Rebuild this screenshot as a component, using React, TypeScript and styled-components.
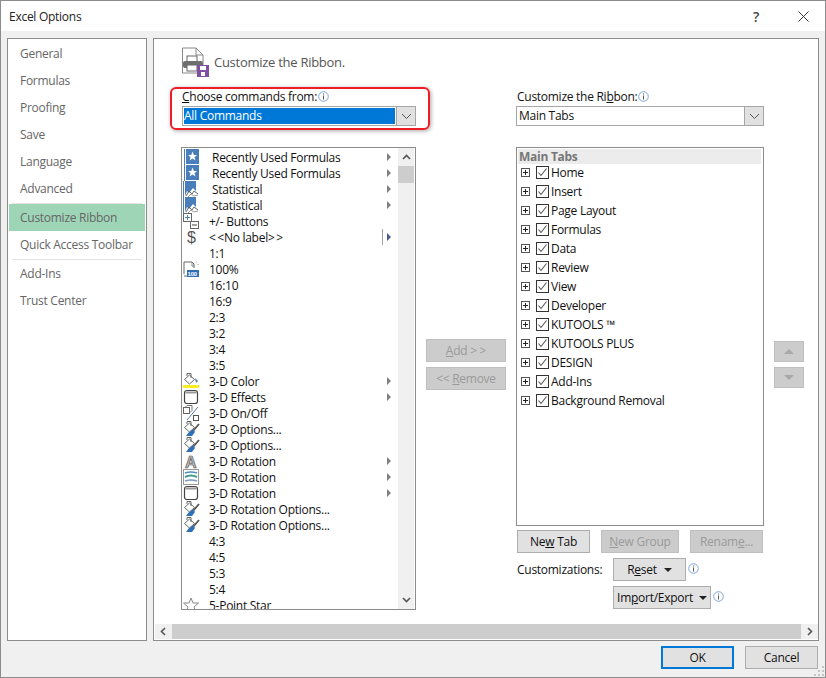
import styled, { createGlobalStyle } from 'styled-components';
import type { ReactNode } from 'react';

const GlobalStyle = createGlobalStyle`
  html, body {
    margin: 0;
    padding: 0;
    background: #f0f0f0;
  }
  * {
    box-sizing: border-box;
  }
  u {
    text-underline-offset: 1px;
  }
`;

const Window = styled.div`
  position: relative;
  width: 826px;
  height: 678px;
  display: flex;
  flex-direction: column;
  border: 1px solid #8c8c8c;
  background: #f0f0f0;
  overflow: hidden;
  font-family: "Open Sans", "Noto Sans", sans-serif;
  font-size: 12px;
  letter-spacing: -0.27px;
  color: #111;
`;

const TitleBar = styled.div`
  height: 30px;
  flex: none;
  display: flex;
  align-items: center;
  padding: 0 16px 0 8px;
  background: #fff;
  color: #222;
`;

const TitleText = styled.div`
  flex: 1;
`;

const HelpMark = styled.div`
  width: 45px;
  font-size: 14px;
  font-weight: 600;
  color: #444;
`;

const Body = styled.div`
  flex: 1;
  min-height: 0;
  display: flex;
  gap: 6px;
  padding: 7px 0 0 6px;
`;

const Nav = styled.div`
  width: 140px;
  height: 603px;
  flex: none;
  padding: 1px 1px 0;
  border: 1px solid #8c8c8c;
  background: #fff;
`;

const NavItem = styled.div<{ $active?: boolean }>`
  height: 27px;
  display: flex;
  align-items: center;
  padding-left: 11px;
  color: #666;
  background: ${(p) => (p.$active ? '#9fd5b7' : 'transparent')};
  font-size: 12px;
`;

const NavRule = styled.div`
  height: 1px;
  margin: 1px 3px 0;
  background: #e4e4e4;
`;

const Panel = styled.div`
  width: 666px;
  height: 603px;
  flex: none;
  display: flex;
  flex-direction: column;
  border: 1px solid #8c8c8c;
  background: #fff;
`;

const PanelContent = styled.div`
  flex: 1;
  min-height: 0;
  padding: 8px 0 0 27px;
`;

const Heading = styled.div`
  display: flex;
  align-items: center;
  gap: 3px;
  height: 30px;
  margin-bottom: 11px;
  font-size: 13px;
  color: #555;
`;

const Columns = styled.div`
  display: grid;
  grid-template-columns: 235px 80px 248px 30px;
  column-gap: 10px;
`;

const Column = styled.div`
  display: flex;
  flex-direction: column;
`;

const Highlight = styled.div`
  position: relative;
  margin-bottom: 21px;

  &::after {
    content: '';
    position: absolute;
    top: -1px;
    left: -11px;
    right: -14px;
    bottom: -4px;
    border: 2px solid #ee1c25;
    border-radius: 6px;
    box-shadow: 1px 1px 4px rgba(0, 0, 0, 0.35);
    pointer-events: none;
  }
`;

const FieldLabel = styled.div<{ $inset?: number }>`
  height: 18px;
  display: flex;
  align-items: center;
  gap: 1px;
  padding: 0 0 2px ${(p) => p.$inset ?? 1}px;
`;

const Select = styled.div<{ $inset?: number; $gap?: number }>`
  height: 20px;
  display: flex;
  margin-left: ${(p) => p.$inset ?? 0}px;
  margin-bottom: ${(p) => p.$gap ?? 0}px;
  border: 1px solid #a6a6a6;
  background: #fff;
`;

const SelectValue = styled.div<{ $selected?: boolean }>`
  flex: 1;
  display: flex;
  align-items: center;
  padding: 0 0 2px ${(p) => (p.$selected ? 0 : 2)}px;
  margin: ${(p) => (p.$selected ? '1px' : '0')};
  background: ${(p) => (p.$selected ? '#0078d7' : 'transparent')};
  color: ${(p) => (p.$selected ? '#fff' : '#111')};
`;

const SelectButton = styled.div`
  width: 19px;
  display: flex;
  align-items: center;
  justify-content: center;
  background: #e1e1e1;
  border-left: 1px solid #a6a6a6;
`;

const ListBox = styled.div`
  height: 463px;
  display: flex;
  padding-right: 1px;
  border: 1px solid #8c8c8c;
  background: #fff;
`;

const ListItems = styled.div`
  flex: 1;
  min-width: 0;
  padding: 1px 0 0 1px;
  overflow: hidden;
`;

const ListRow = styled.div`
  height: 16px;
  display: flex;
  align-items: center;
  white-space: nowrap;
`;

const RowIcon = styled.span`
  width: 16px;
  height: 16px;
  flex: none;
  display: block;

  svg {
    overflow: visible;
  }
`;

const RowLabel = styled.span<{ $far?: boolean }>`
  flex: 1;
  margin-left: ${(p) => (p.$far ? 13 : 10)}px;
`;

const SubmenuArrow = styled.span<{ $split?: boolean }>`
  width: 0;
  height: 0;
  margin-right: 7px;
  border-left: 4px solid ${(p) => (p.$split ? '#4a5a8c' : '#808080')};
  border-top: 4px solid transparent;
  border-bottom: 4px solid transparent;
`;

const SplitRule = styled.span`
  width: 1px;
  height: 16px;
  margin-right: 4px;
  background: #a0a0a0;
`;

const VScroll = styled.div`
  width: 16px;
  flex: none;
  display: flex;
  flex-direction: column;
  background: #f0f0f0;
`;

const ScrollEnd = styled.div<{ $h: number }>`
  height: ${(p) => p.$h}px;
  flex: none;
  display: flex;
  align-items: center;
  justify-content: center;
`;

const VThumb = styled.div`
  height: 17px;
  flex: none;
  background: #cdcdcd;
`;

const ScrollSpacer = styled.div`
  flex: 1;
`;

const TreeBox = styled.div`
  height: 379px;
  margin-bottom: 4px;
  padding: 1px;
  border: 1px solid #8c8c8c;
  background: #fff;
`;

const TreeHeader = styled.div`
  height: 15px;
  display: flex;
  align-items: center;
  padding-left: 1px;
  margin: 0 1px -1px 0;
  background: #ececec;
  color: #777;
  font-weight: 700;
`;

const TreeRow = styled.div`
  position: relative;
  height: 19px;
  display: flex;
  align-items: center;
  padding-left: 3px;
`;

const Expander = styled.span`
  position: relative;
  width: 9px;
  height: 9px;
  flex: none;
  margin-right: 6px;
  border: 1px solid #555;

  &::before,
  &::after {
    content: '';
    position: absolute;
    background: #222;
  }
  &::before {
    left: 1px;
    right: 1px;
    top: 3px;
    height: 1px;
  }
  &::after {
    top: 1px;
    bottom: 1px;
    left: 3px;
    width: 1px;
  }
`;

const CheckBox = styled.span`
  width: 13px;
  height: 13px;
  flex: none;
  display: flex;
  margin-right: 2px;
  border: 1px solid #333;
  background: #fff;
`;

const Button = styled.div<{ $w?: number; $off?: boolean; $h?: number; $gap?: number }>`
  width: ${(p) => (p.$w ? `${p.$w}px` : 'auto')};
  height: ${(p) => p.$h ?? 23}px;
  flex: none;
  display: flex;
  align-items: center;
  justify-content: center;
  gap: ${(p) => p.$gap ?? 9}px;
  border: 1px solid ${(p) => (p.$off ? '#bfbfbf' : '#adadad')};
  background: ${(p) => (p.$off ? '#cccccc' : '#e1e1e1')};
  color: ${(p) => (p.$off ? '#9a9a9a' : '#111')};
`;

const TreeButtons = styled.div`
  display: flex;
  justify-content: space-between;
  padding: 0 1px;
  margin-bottom: 5px;
`;

const Customizations = styled.div`
  display: grid;
  grid-template-columns: 96px auto;
  padding-left: 1px;
`;

const CustomLabel = styled.div`
  height: 23px;
  display: flex;
  align-items: center;
`;

const CustomActions = styled.div`
  display: flex;
  flex-direction: column;
  gap: 5px;
`;

const ActionRow = styled.div`
  display: flex;
  align-items: flex-start;
  gap: 2px;
`;

const InfoSlot = styled.span`
  margin-top: 5px;
  display: flex;
`;

const DropCaret = styled.span`
  width: 0;
  height: 0;
  border-top: 4px solid #222;
  border-left: 4px solid transparent;
  border-right: 4px solid transparent;
`;

const MiddleColumn = styled(Column)`
  gap: 5px;
  padding-top: 251px;
`;

const MoveColumn = styled(Column)`
  gap: 5px;
  padding-top: 253px;
`;

const Triangle = styled.span<{ $down?: boolean }>`
  width: 0;
  height: 0;
  border-left: 5px solid transparent;
  border-right: 5px solid transparent;
  ${(p) => (p.$down ? 'border-top: 5px solid #a8a8a8;' : 'border-bottom: 5px solid #a8a8a8;')}
`;

const HScroll = styled.div`
  height: 15px;
  flex: none;
  display: flex;
  margin: 0 0 1px 1px;
  background: #f0f0f0;
`;

const HArrow = styled.div`
  width: 17px;
  flex: none;
  display: flex;
  align-items: center;
  justify-content: center;
`;

const HThumb = styled.div`
  flex: 1;
  background: #cdcdcd;
`;

const Footer = styled.div`
  height: 36px;
  flex: none;
  display: flex;
  justify-content: flex-end;
  gap: 11px;
  padding: 5px 7px 0 0;
`;

const FooterButton = styled.div<{ $primary?: boolean }>`
  width: 73px;
  height: 23px;
  display: flex;
  align-items: center;
  justify-content: center;
  border: ${(p) => (p.$primary ? '2px solid #0078d7' : '1px solid #adadad')};
  background: #e1e1e1;
`;

const Gripper = styled.svg`
  position: absolute;
  right: 0;
  bottom: 0;
`;

const Chevron = ({ dir }: { dir: 'up' | 'down' | 'left' | 'right' }) => {
  const points = {
    down: '1,2 4.5,5.5 8,2',
    up: '1,6 4.5,2.5 8,6',
    left: '6,1 2.5,4.5 6,8',
    right: '3,1 6.5,4.5 3,8',
  }[dir];
  return (
    <svg width="9" height="9" viewBox="0 0 9 9">
      <polyline points={points} fill="none" stroke="#555" strokeWidth="1.6" />
    </svg>
  );
};

const ThinChevron = () => (
  <svg width="11" height="7" viewBox="0 0 11 7">
    <polyline points="1,1 5.5,5.5 10,1" fill="none" stroke="#555" strokeWidth="1" />
  </svg>
);

const Info = () => (
  <svg width="11" height="11" viewBox="0 0 11 11">
    <circle cx="5.5" cy="5.5" r="4.8" fill="#fff" stroke="#7da7d9" />
    <rect x="5" y="2.5" width="1" height="1" fill="#555" />
    <rect x="5" y="4.5" width="1" height="4" fill="#555" />
  </svg>
);

const Check = () => (
  <svg width="11" height="11" viewBox="0 0 11 11">
    <polyline points="1.5,5.5 4,8.5 9.5,1.5" fill="none" stroke="#555" strokeWidth="1.1" />
  </svg>
);

const blue = '#4a7ebb';

const bucket = (
  <>
    <polygon points="6.5,2 11.5,6.5 6.5,11 1.5,6.5" fill="#fff" stroke="#666" />
    <path d="M4 3 V0.5 H8 V5" fill="none" stroke="#666" />
  </>
);

const icons: Record<string, ReactNode> = {
  star: (
    <>
      <rect x="1" y="0" width="1" height="16" fill={blue} />
      <rect x="3" y="0" width="13" height="15" fill={blue} />
      <polygon points="9.5,2.5 10.8,6 14,6 11.5,8.2 12.5,11.5 9.5,9.5 6.5,11.5 7.5,8.2 5,6 8.2,6" fill="#fff" />
    </>
  ),
  chart: (
    <>
      <rect x="0" y="0" width="1" height="16" fill={blue} />
      <path d="M2 0 H13 V10 L10 7 L6 12 L4 10 L2 15 Z" fill={blue} />
      <polyline points="3,15 6,10 9,13 11,10 15,13" fill="none" stroke="#666" />
      <polyline points="5,16 8,13 11,15 15,14" fill="none" stroke="#999" />
    </>
  ),
  plusminus: (
    <>
      <rect x="0.5" y="0.5" width="8" height="8" fill="#fff" stroke="#666" />
      <path d="M2 4.5 h5 M4.5 2 v5" stroke={blue} />
      <rect x="7.5" y="8.5" width="8" height="7" fill="#fff" stroke="#666" />
      <path d="M9 12 h5" stroke="#444" />
    </>
  ),
  dollar: (
    <text x="4" y="14" fontSize="16" fontFamily="Liberation Sans" fill="#555">
      $
    </text>
  ),
  hundred: (
    <>
      <path d="M1 13 V1 H9 L11 3 V7 M1 15 h3" fill="none" stroke="#666" />
      <path d="M9 1 V5 H11.5" fill="none" stroke="#888" />
      <path d="M13 1 h2 M15 3 v2" stroke="#aaa" strokeDasharray="1 1" />
      <rect x="4" y="9" width="12" height="7" fill="#2f6fb5" />
      <text x="4.6" y="15" fontSize="6" fontWeight="700" fontFamily="Liberation Sans" fill="#fff">
        100
      </text>
    </>
  ),
  bucket: (
    <>
      {bucket}
      <path d="M12 5 l3 3 -2 2 z" fill={blue} />
      <rect x="0" y="12" width="16" height="3" fill="#f7ee1c" />
    </>
  ),
  cube: (
    <>
      <rect x="1.5" y="1.5" width="13" height="13" rx="2.5" fill="#fff" stroke="#444" strokeWidth="1.2" />
      <path d="M2.5 3.5 H13.5" stroke="#999" strokeWidth="2" />
    </>
  ),
  onoff: (
    <>
      <rect x="0.5" y="2.5" width="6" height="6" fill="#fff" stroke="#666" />
      <path d="M2 2.5 l2 -2 h5 v5 l-2 2" fill="none" stroke="#777" />
      <path d="M4 15 L15 2" stroke={blue} />
      <rect x="10.5" y="10.5" width="5" height="5" fill="#fff" stroke="#555" />
    </>
  ),
  brush: (
    <>
      {bucket}
      <path d="M16 3 L10 10" stroke="#555" strokeWidth="1.8" />
      <path d="M10 8.5 L6 11 L3 15 L9 15 L12 11 Z" fill="#2f6fb5" />
    </>
  ),
  letter: (
    <text x="2" y="15" fontSize="16" fontWeight="700" fontFamily="Liberation Sans" fill="#bbb" stroke="#555" strokeWidth="0.7">
      A
    </text>
  ),
  wave: (
    <>
      <rect x="0.5" y="0.5" width="15" height="15" fill="#fff" stroke="#999" />
      <path d="M2 4 Q8 2 14 4" stroke="#4a90c2" strokeWidth="1.5" fill="none" />
      <path d="M2 8 Q8 5 14 8" stroke="#3f9a8c" strokeWidth="2" fill="none" />
      <path d="M2 12 Q8 10 14 12" stroke="#7a9ac2" strokeWidth="1.5" fill="none" />
    </>
  ),
  outline: (
    <polygon points="8,1 10,6 15.5,6 11,10 13,15.5 8,12.5 3,15.5 5,10 0.5,6 6,6" fill="#fff" stroke="#888" />
  ),
};

const Icon = ({ name }: { name?: string }) => (
  <RowIcon>
    {name && (
      <svg width="16" height="16" viewBox="0 0 16 16">
        {icons[name]}
      </svg>
    )}
  </RowIcon>
);

type Command = { label: string; icon?: string; far?: boolean; sub?: boolean; split?: boolean };

const commands: Command[] = [
  { label: 'Recently Used Formulas', icon: 'star', far: true, sub: true },
  { label: 'Recently Used Formulas', icon: 'star', far: true, sub: true },
  { label: 'Statistical', icon: 'chart', far: true, sub: true },
  { label: 'Statistical', icon: 'chart', far: true, sub: true },
  { label: '+/- Buttons', icon: 'plusminus' },
  { label: '<\u2009<No label>\u2009>', icon: 'dollar', split: true },
  { label: '1:1' },
  { label: '100%', icon: 'hundred' },
  { label: '16:10' },
  { label: '16:9' },
  { label: '2:3' },
  { label: '3:2' },
  { label: '3:4' },
  { label: '3:5' },
  { label: '3-D Color', icon: 'bucket', sub: true },
  { label: '3-D Effects', icon: 'cube', sub: true },
  { label: '3-D On/Off', icon: 'onoff' },
  { label: '3-D Options...', icon: 'brush' },
  { label: '3-D Options...', icon: 'brush' },
  { label: '3-D Rotation', icon: 'letter', sub: true },
  { label: '3-D Rotation', icon: 'wave', sub: true },
  { label: '3-D Rotation', icon: 'cube', sub: true },
  { label: '3-D Rotation Options...', icon: 'brush' },
  { label: '3-D Rotation Options...', icon: 'brush' },
  { label: '4:3' },
  { label: '4:5' },
  { label: '5:3' },
  { label: '5:4' },
  { label: '5-Point Star', icon: 'outline' },
];

const navTop = ['General', 'Formulas', 'Proofing', 'Save', 'Language', 'Advanced'];

const tabs = [
  'Home',
  'Insert',
  'Page Layout',
  'Formulas',
  'Data',
  'Review',
  'View',
  'Developer',
  'KUTOOLS ™',
  'KUTOOLS PLUS',
  'DESIGN',
  'Add-Ins',
  'Background Removal',
];

const HeadingIcon = () => (
  <svg width="30" height="30" viewBox="0 0 30 30">
    <path d="M1.5 1 H15 L22 8 V26 H1.5 Z" fill="#fff" stroke="#888" />
    <path d="M15 1 V8 H22" fill="none" stroke="#888" />
    <rect x="6" y="9" width="10" height="6" fill="#fff" stroke="#666" />
    <rect x="2" y="14" width="20" height="7" rx="2" fill="#6e6e6e" />
    <rect x="6" y="18" width="10" height="6" fill="#fff" stroke="#666" />
    <rect x="16" y="18" width="12" height="12" fill="#7e4fa3" />
    <rect x="19" y="19" width="6" height="4" fill="#fff" />
    <rect x="20" y="25" width="4" height="4" fill="#fff" />
  </svg>
);

export default function App() {
  return (
    <>
      <GlobalStyle />
      <Window>
        <TitleBar>
          <TitleText>Excel Options</TitleText>
          <HelpMark>?</HelpMark>
          <svg width="11" height="11" viewBox="0 0 11 11">
            <path d="M0.5 0.5 L10.5 10.5 M10.5 0.5 L0.5 10.5" stroke="#333" />
          </svg>
        </TitleBar>

        <Body>
          <Nav>
            {navTop.map((item) => (
              <NavItem key={item}>{item}</NavItem>
            ))}
            <NavRule />
            <NavItem $active>Customize Ribbon</NavItem>
            <NavItem>Quick Access Toolbar</NavItem>
            <NavRule />
            <NavItem>Add-Ins</NavItem>
            <NavItem>Trust Center</NavItem>
          </Nav>

          <Panel>
            <PanelContent>
              <Heading>
                <HeadingIcon />
                Customize the Ribbon.
              </Heading>

              <Columns>
                <Column>
                  <Highlight>
                    <FieldLabel>
                      <span>
                        <u>C</u>hoose commands from:
                      </span>
                      <Info />
                    </FieldLabel>
                    <Select $inset={1}>
                      <SelectValue $selected>All Commands</SelectValue>
                      <SelectButton>
                        <ThinChevron />
                      </SelectButton>
                    </Select>
                  </Highlight>

                  <ListBox>
                    <ListItems>
                      {commands.map((c, i) => (
                        <ListRow key={i}>
                          <Icon name={c.icon} />
                          <RowLabel $far={c.far}>{c.label}</RowLabel>
                          {c.split && <SplitRule />}
                          {(c.sub || c.split) && <SubmenuArrow $split={c.split} />}
                        </ListRow>
                      ))}
                    </ListItems>
                    <VScroll>
                      <ScrollEnd $h={18}>
                        <Chevron dir="up" />
                      </ScrollEnd>
                      <VThumb />
                      <ScrollSpacer />
                      <ScrollEnd $h={18}>
                        <Chevron dir="down" />
                      </ScrollEnd>
                    </VScroll>
                  </ListBox>
                </Column>

                <MiddleColumn>
                  <Button $off>
                    <span>
                      <u>A</u>dd &gt; &gt;
                    </span>
                  </Button>
                  <Button $off>
                    <span>
                      &lt;&lt; <u>R</u>emove
                    </span>
                  </Button>
                </MiddleColumn>

                <Column>
                  <FieldLabel>
                    <span>
                      Customize the Ri<u>b</u>bon:
                    </span>
                    <Info />
                  </FieldLabel>
                  <Select $gap={21}>
                    <SelectValue>Main Tabs</SelectValue>
                    <SelectButton>
                      <ThinChevron />
                    </SelectButton>
                  </Select>

                  <TreeBox>
                    <TreeHeader>Main Tabs</TreeHeader>
                    {tabs.map((tab) => (
                      <TreeRow key={tab}>
                        <Expander />
                        <CheckBox>
                          <Check />
                        </CheckBox>
                        {tab}
                      </TreeRow>
                    ))}
                  </TreeBox>

                  <TreeButtons>
                    <Button $w={73}>
                      <span>
                        Ne<u>w</u> Tab
                      </span>
                    </Button>
                    <Button $w={78} $off>
                      <span>
                        <u>N</u>ew Group
                      </span>
                    </Button>
                    <Button $w={73} $off>
                      <span>
                        Renam<u>e</u>...
                      </span>
                    </Button>
                  </TreeButtons>

                  <Customizations>
                    <CustomLabel>Customizations:</CustomLabel>
                    <CustomActions>
                      <ActionRow>
                        <Button $w={73} $gap={7}>
                          <span>
                            R<u>e</u>set
                          </span>
                          <DropCaret />
                        </Button>
                        <InfoSlot>
                          <Info />
                        </InfoSlot>
                      </ActionRow>
                      <ActionRow>
                        <Button $w={98} $gap={6}>
                          <span>
                            Im<u>p</u>ort/Export
                          </span>
                          <DropCaret />
                        </Button>
                        <InfoSlot>
                          <Info />
                        </InfoSlot>
                      </ActionRow>
                    </CustomActions>
                  </Customizations>
                </Column>

                <MoveColumn>
                  <Button $off $h={21}>
                    <Triangle />
                  </Button>
                  <Button $off $h={21}>
                    <Triangle $down />
                  </Button>
                </MoveColumn>
              </Columns>
            </PanelContent>

            <HScroll>
              <HArrow>
                <Chevron dir="left" />
              </HArrow>
              <HThumb />
              <HArrow>
                <Chevron dir="right" />
              </HArrow>
            </HScroll>
          </Panel>
        </Body>

        <Footer>
          <FooterButton $primary>OK</FooterButton>
          <FooterButton>Cancel</FooterButton>
        </Footer>

        <Gripper width="11" height="11" viewBox="0 0 11 11">
          <path d="M8 0 h2 v2 h-2 z M4 4 h2 v2 h-2 z M8 4 h2 v2 h-2 z M0 8 h2 v2 h-2 z M4 8 h2 v2 h-2 z M8 8 h2 v2 h-2 z" fill="#c4c4c4" />
        </Gripper>
      </Window>
    </>
  );
}
